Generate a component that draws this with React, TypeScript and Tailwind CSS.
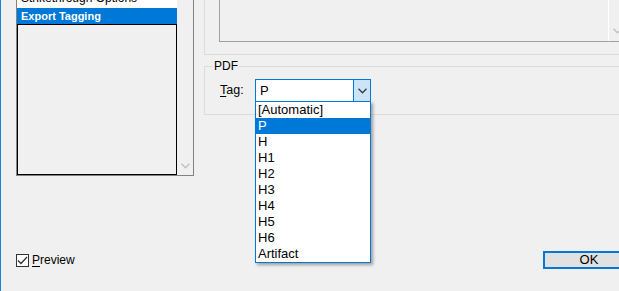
import React from "react";

const tags = ["[Automatic]", "P", "H", "H1", "H2", "H3", "H4", "H5", "H6", "Artifact"];

function Chevron({ className }: { className?: string }) {
  return (
    <svg width="9" height="6" viewBox="0 0 9 6" className={className}>
      <polyline points="0.5,0.8 4.5,4.8 8.5,0.8" fill="none" stroke="currentColor" strokeWidth="1.3" />
    </svg>
  );
}

function PageList() {
  return (
    <div className="-mt-[10px] h-[186px] w-[178px] flex border-x border-b border-[#828282] bg-[#f0f0f0]">
      <div className="w-[160px] flex flex-col">
        <div className="h-[18px] bg-white pl-[4px] leading-[16px] text-[#000]">Strikethrough Options</div>
        <div className="h-[16px] bg-[#0078d7] pl-[4px] leading-[16px] font-bold text-white text-[11px]">
          Export Tagging
        </div>
        <div className="flex-1 border border-black bg-[#f0f0f0]" />
      </div>
      <div className="w-[16px] flex flex-col justify-end items-center pb-[6px] text-[#c0c0c0]">
        <Chevron />
      </div>
    </div>
  );
}

function TagSelect() {
  return (
    <div className="relative w-[116px] h-[23px] flex border border-[#0078d7] bg-white text-[13px]">
      <div className="flex-1 pl-[4px] leading-[21px]">P</div>
      <div className="w-[17px] border-l border-[#0078d7] bg-[#cce4f7] flex items-center justify-center text-[#3c3c3c]">
        <Chevron />
      </div>
      <div className="absolute top-full -left-px w-[116px] border border-[#0078d7] bg-white shadow-[2px_2px_3px_rgba(0,0,0,0.35)] z-10">
        {tags.map((t) => (
          <div
            key={t}
            className={
              t === "P"
                ? "h-[16px] pl-[2px] leading-[16px] bg-[#0078d7] text-white"
                : "h-[16px] pl-[2px] leading-[16px]"
            }
          >
            {t}
          </div>
        ))}
      </div>
    </div>
  );
}

export default function App() {
  return (
    <div className="w-[619px] h-[291px] overflow-hidden flex flex-col bg-[#f0f0f0] border-l border-[#1883d7] text-black text-[12px] font-['Liberation_Sans',Arial,sans-serif]">
      <div className="flex flex-1 pl-[15px]">
        <PageList />

        {/* Right column */}
        <div className="ml-[10px] flex flex-col">
          <div className="-mt-[10px] h-[65px] w-[440px] border border-[#dcdcdc] pl-[14px] pb-[12px]">
            <div className="h-full w-[407px] flex border-l border-b border-[#a0a0a0]">
              <div className="flex-1" />
              <div className="w-[18px] border-l border-white flex flex-col justify-end items-center pb-[7px] text-[#c0c0c0]">
                <Chevron />
              </div>
            </div>
          </div>

          <div className="relative mt-[11px] h-[49px] w-[440px] border border-[#dcdcdc] pt-[12px] pl-[15px]">
            <div className="absolute -top-[9px] left-[8px] px-[1px] bg-[#f0f0f0] leading-[16px]">PDF</div>
            <div className="flex items-center">
              <span className="w-[35px] text-[12.5px]">
                <span className="underline underline-offset-2">T</span>ag:
              </span>
              <TagSelect />
            </div>
          </div>
        </div>
      </div>

      {/* Bottom row */}
      <div className="h-[22px] mb-[20px] flex items-center justify-between pl-[15px]">
        <label className="flex items-center gap-[3px]">
          <span className="w-[13px] h-[13px] border border-[#333] bg-white flex items-center justify-center">
            <svg width="11" height="9" viewBox="0 0 11 9">
              <polyline points="1,4.5 4,7.5 10,1" fill="none" stroke="#333" strokeWidth="1.3" />
            </svg>
          </span>
          <span>
            <span className="underline underline-offset-2">P</span>review
          </span>
        </label>
        <button className="-mr-[16px] w-[92px] h-[18px] border-2 border-[#0078d7] bg-[#e1e1e1] leading-[14px] text-[13px]">
          OK
        </button>
      </div>
    </div>
  );
}
